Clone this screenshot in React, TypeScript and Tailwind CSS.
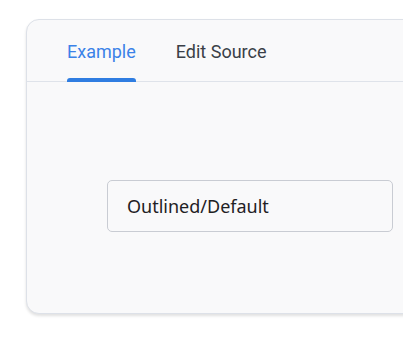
export default function App() {
  return (
    <div className="w-[403px] h-[337px] bg-white overflow-hidden font-['Roboto',sans-serif]">
      <div className="ml-[26px] mt-[19px] w-[400px] h-[295px] rounded-[13px] border border-[#dde1e8] bg-[#f9f9fa] shadow-[0_2px_3px_rgba(0,0,0,0.12)]">
        <div className="flex gap-10 pl-10 h-[62px] border-b border-[#dfe3ea]">
          <div className="relative flex items-center pt-[2px] text-[18px] text-[#3b82e8]">
            Example
            <div className="absolute left-0 right-0 bottom-[-1px] h-[4px] rounded-t-[3px] bg-[#2f7de1]" />
          </div>
          <div className="flex items-center pt-[2px] text-[18px] text-[#3a3f47]">Edit Source</div>
        </div>
        <div className="pt-[98px] pl-[80px]">
          <div className="w-[286px] h-[52px] flex items-center pl-[19px] rounded-[5px] border border-[#c9ccd3] font-['Noto_Sans',sans-serif] text-[18px] text-[#1f2124]">
            Outlined/Default
          </div>
        </div>
      </div>
    </div>
  );
}
